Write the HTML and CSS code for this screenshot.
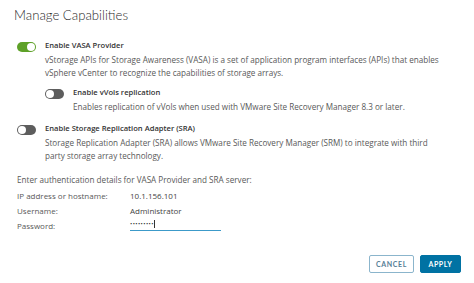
FILE: index.html
```html
<!DOCTYPE html>
<html lang="en">
  <head>
    <meta charset="UTF-8" />
    <title>Manage Capabilities</title>
    <link rel="stylesheet" href="styles.css">
  </head>
  <body>
    <div class="dialog">
      <h1 class="title">Manage Capabilities</h1>

      <!-- VASA provider -->
      <div class="option">
        <span class="toggle on"></span>
        <div class="option-text">
          <div class="label">Enable VASA Provider</div>
          <div class="desc">vStorage APIs for Storage Awareness (VASA) is a set of application program interfaces (APIs) that enables vSphere vCenter to recognize the capabilities of storage arrays.</div>
        </div>
      </div>

      <div class="option sub">
        <span class="toggle"></span>
        <div class="option-text">
          <div class="label">Enable vVols replication</div>
          <div class="desc">Enables replication of vVols when used with VMware Site Recovery Manager 8.3 or later.</div>
        </div>
      </div>

      <!-- SRA -->
      <div class="option">
        <span class="toggle"></span>
        <div class="option-text">
          <div class="label">Enable Storage Replication Adapter (SRA)</div>
          <div class="desc">Storage Replication Adapter (SRA) allows VMware Site Recovery Manager (SRM) to integrate with third party storage array technology.</div>
        </div>
      </div>

      <p class="auth-intro">Enter authentication details for VASA Provider and SRA server:</p>
      <div class="form">
        <div class="form-label">IP address or hostname:</div>
        <div class="form-value">10.1.156.101</div>
        <div class="form-label">Username:</div>
        <div class="form-value">Administrator</div>
        <div class="form-label">Password:</div>
        <div class="form-value"><span class="password">&bull;&bull;&bull;&bull;&bull;&bull;&bull;&bull;&bull;<span class="caret"></span></span></div>
      </div>

      <div class="footer">
        <button class="btn btn-outline">CANCEL</button>
        <button class="btn btn-primary">APPLY</button>
      </div>
    </div>
  </body>
</html>
```

FILE: styles.css
```css
/* Global */
body {
  margin: 0;
  background-color: #ffffff;
  font-family: "Open Sans", sans-serif;
  color: #595959;
}

.dialog {
  width: 474px;
  height: 283px;
  box-sizing: border-box;
  padding: 6px 13px 0 14px;
  display: flex;
  flex-direction: column;
}

.title {
  margin: 0;
  font-family: "Lato", sans-serif;
  font-size: 13.2px;
  font-weight: 300;
  color: #2b2b2b;
  line-height: 18px;
}

/* Toggle options */
.option {
  display: flex;
  margin-top: 16px;
  padding-left: 3px;
}

.option.sub {
  padding-left: 31px;
  margin-top: 8px;
}

.option.sub + .option {
  margin-top: 10px;
}

.option-text {
  max-width: 400px;
}

.toggle {
  width: 19px;
  height: 10px;
  border-radius: 5px;
  background-color: #5d5d5d;
  position: relative;
  flex-shrink: 0;
  margin-top: 2px;
  margin-right: 9px;
}

.toggle::after {
  content: "";
  position: absolute;
  top: 1px;
  left: 1px;
  width: 8px;
  height: 8px;
  border-radius: 50%;
  background-color: #fff;
}

.toggle.on {
  background-color: #5ea128;
}

.toggle.on::after {
  left: 10px;
}

.label {
  font-size: 7.6px;
  font-weight: 600;
  color: #333;
  line-height: 13px;
  margin-top: -1px;
}

.desc {
  font-size: 8.15px;
  line-height: 13px;
  margin-top: 1px;
}

/* Authentication form */
.auth-intro {
  margin: 11px 0 0 3px;
  font-size: 8.15px;
  line-height: 13px;
}

.form {
  display: grid;
  grid-template-columns: 113px 91px;
  row-gap: 2px;
  margin: 3px 0 0 3px;
  font-size: 8px;
  line-height: 13px;
}

.form-value {
  color: #444;
}

.password {
  display: block;
  border-bottom: 1.5px solid #3c9ac9;
  letter-spacing: 0.4px;
  font-size: 6px;
  height: 11px;
  line-height: 11px;
  color: #333;
}

.caret {
  display: inline-block;
  width: 1px;
  height: 8px;
  background-color: #333;
  vertical-align: middle;
}

/* Footer buttons */
.footer {
  margin-top: auto;
  margin-bottom: 10px;
  display: flex;
  justify-content: flex-end;
  gap: 6px;
}

.btn {
  height: 18px;
  padding: 0;
  border-radius: 2px;
  font-family: "Lato", sans-serif;
  font-size: 7px;
  font-weight: 700;
  letter-spacing: 0.6px;
  cursor: pointer;
}

.btn-outline {
  background-color: #fff;
  border: 1px solid #8bb5cc;
  color: #557e96;
  width: 45px;
}

.btn-primary {
  background-color: #0072a3;
  border: 1px solid #0072a3;
  color: #fff;
  width: 41px;
}
```
